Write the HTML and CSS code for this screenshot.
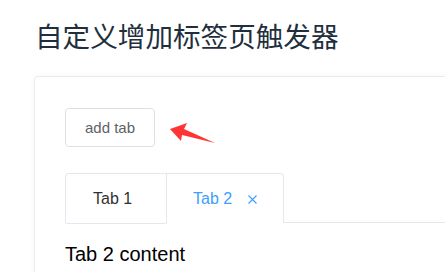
FILE: index.html
```html
<!DOCTYPE html>
<html lang="zh">
<head>
<meta charset="utf-8">
<link rel="stylesheet" href="styles.css">
</head>
<body>
<div class="page">
  <h1 class="title">自定义增加标签页触发器</h1>
  <div class="card">
    <div class="toolbar">
      <button class="btn" type="button">add tab</button>
      <svg class="arrow" width="60" height="30" viewBox="0 0 60 30" aria-hidden="true">
        <polygon points="0,9 17,3 14,9 45,23 12,15 11,21" fill="#ff3535"/>
      </svg>
    </div>
    <div class="tabs">
      <div class="tabs-header">
        <div class="tabs-nav">
          <div class="tab tab-first">Tab 1</div>
          <div class="tab tab-active">Tab 2
            <svg class="close" width="9" height="9" viewBox="0 0 9 9" aria-hidden="true">
              <path d="M0.5 0.5 L8.5 8.5 M8.5 0.5 L0.5 8.5" stroke="#409eff" stroke-width="1.1" fill="none"/>
            </svg>
          </div>
        </div>
        <div class="tabs-rest"></div>
      </div>
      <div class="tab-content">Tab 2 content</div>
    </div>
  </div>
</div>
</body>
</html>
```

FILE: styles.css
```css
html, body {
  margin: 0;
  padding: 0;
  background: #ffffff;
  overflow: hidden;
}
.page {
  width: 445px;
  height: 272px;
  overflow: hidden;
  font-family: "Liberation Sans", Arial, sans-serif;
}
.title {
  margin: 0;
  padding: 14px 0 0 35px;
  font-family: "Noto Sans CJK SC", sans-serif;
  font-weight: 400;
  font-size: 27.6px;
  line-height: 42px;
  color: #1f2f3d;
  white-space: nowrap;
}
.card {
  margin: 20px 0 0 34px;
  width: 700px;
  height: 300px;
  border: 1px solid #ebebeb;
  border-radius: 4px;
  box-shadow: 0 0 6px rgba(0,0,0,0.04);
  padding: 31px 30px 0 30px;
  box-sizing: border-box;
  background: #fff;
}
.toolbar {
  position: relative;
  height: 39px;
}
.btn {
  display: block;
  height: 39px;
  width: 90px;
  padding: 0;
  border: 1px solid #dcdfe6;
  border-radius: 4px;
  background: #fff;
  color: #606266;
  font-family: "Liberation Sans", Arial, sans-serif;
  font-size: 15px;
  line-height: 37px;
  text-align: center;
}
.arrow {
  position: absolute;
  left: 105px;
  top: 12px;
}
.tabs {
  margin-top: 26px;
}
.tabs-header {
  display: flex;
  height: 50px;
}
.tabs-nav {
  display: flex;
  border: 1px solid #e4e7ed;
  border-bottom: none;
  border-radius: 4px 4px 0 0;
}
.tab {
  height: 50px;
  box-sizing: border-box;
  font-size: 16px;
  line-height: 49px;
  color: #303133;
  white-space: nowrap;
  border-bottom: 1px solid #e4e7ed;
}
.tab-first {
  width: 100px;
  padding-left: 27px;
  box-sizing: border-box;
}
.tab-active {
  width: 117px;
  padding-left: 26px;
  border-left: 1px solid #e4e7ed;
  border-bottom-color: #fff;
  color: #409eff;
  display: flex;
  align-items: center;
  gap: 16px;
}
.close {
  display: block;
  margin-top: 1px;
}
.tabs-rest {
  flex: 1;
  border-bottom: 1px solid #e4e7ed;
}
.tab-content {
  margin-top: 16px;
  font-size: 20px;
  line-height: 30px;
  color: #000;
}
```
